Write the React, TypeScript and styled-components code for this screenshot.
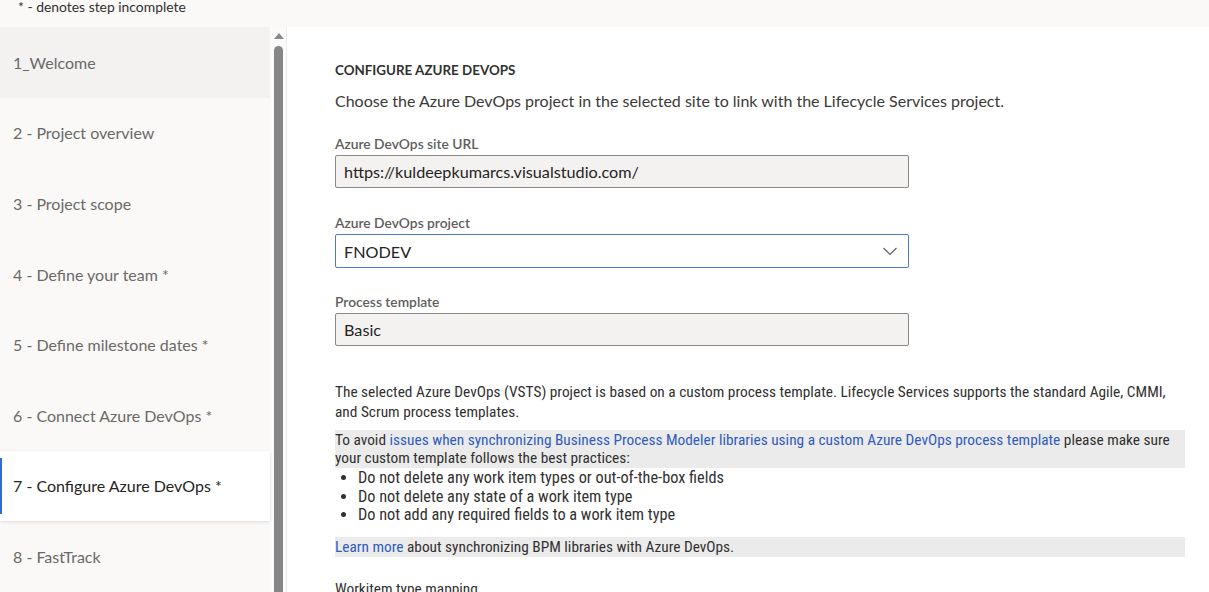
import React from "react"
import styled, { createGlobalStyle } from "styled-components"

const GlobalStyle = createGlobalStyle`
  html, body {
    margin: 0;
    padding: 0;
    background: #ffffff;
    overflow: hidden;
  }
  body {
    font-family: Lato, "Open Sans", sans-serif;
    color: #323130;
  }
`

const steps = [
  { label: "1_Welcome", state: "hover" },
  { label: "2 - Project overview", state: "idle" },
  { label: "3 - Project scope", state: "idle" },
  { label: "4 - Define your team *", state: "idle" },
  { label: "5 - Define milestone dates *", state: "idle" },
  { label: "6 - Connect Azure DevOps *", state: "idle" },
  { label: "7 - Configure Azure DevOps *", state: "active" },
  { label: "8 - FastTrack", state: "idle" },
]

const bullets = [
  "Do not delete any work item types or out-of-the-box fields",
  "Do not delete any state of a work item type",
  "Do not add any required fields to a work item type",
]

const App = () => {
  return (
    <>
      <GlobalStyle />
      <Page>
        <TopBar>* - denotes step incomplete</TopBar>
        <Body>
          <Sidebar>
            {steps.map((s) => (
              <Step key={s.label} $state={s.state}>
                {s.label}
              </Step>
            ))}
          </Sidebar>
          <ScrollTrack>
            <ScrollArrow />
            <ScrollThumb />
          </ScrollTrack>
          <Main>
            <Heading>CONFIGURE AZURE DEVOPS</Heading>
            <Intro>
              Choose the Azure DevOps project in the selected site to link with
              the Lifecycle Services project.
            </Intro>

            <Field>
              <Label>Azure DevOps site URL</Label>
              <ReadOnlyBox>https://kuldeepkumarcs.visualstudio.com/</ReadOnlyBox>
            </Field>

            <Field>
              <Label>Azure DevOps project</Label>
              <SelectBox>
                <span>FNODEV</span>
                <svg width="18" height="18" viewBox="0 0 18 18" fill="none">
                  <path
                    d="M2.5 6 L9 12.5 L15.5 6"
                    stroke="#605e5c"
                    strokeWidth="1.2"
                  />
                </svg>
              </SelectBox>
            </Field>

            <Field>
              <Label>Process template</Label>
              <ReadOnlyBox>Basic</ReadOnlyBox>
            </Field>

            <Notice>
              The selected Azure DevOps (VSTS) project is based on a custom
              process template. Lifecycle Services supports the standard Agile,
              CMMI, and Scrum process templates.
            </Notice>

            <Callout>
              <CalloutText>
                To avoid{" "}
                <Link href="#">
                  issues when synchronizing Business Process Modeler libraries
                  using a custom Azure DevOps process template
                </Link>{" "}
                please make sure your custom template follows the best
                practices:
              </CalloutText>
            </Callout>
            <BulletList>
              {bullets.map((b) => (
                <li key={b}>{b}</li>
              ))}
            </BulletList>

            <Callout $single>
              <CalloutText>
                <Link href="#">Learn more</Link> about synchronizing BPM
                libraries with Azure DevOps.
              </CalloutText>
            </Callout>

            <Mapping>Workitem type mapping</Mapping>
          </Main>
        </Body>
      </Page>
    </>
  )
}

export default App

const Page = styled.div`
  width: 1209px;
  height: 592px;
  display: flex;
  flex-direction: column;
  overflow: hidden;
`

const TopBar = styled.div`
  height: 27px;
  flex-shrink: 0;
  background: #faf9f8;
  font-size: 13.9px;
  line-height: 14px;
  padding-left: 18px;
  color: #323130;
  box-sizing: border-box;
`

const Body = styled.div`
  flex: 1;
  display: flex;
  min-height: 0;
`

const Sidebar = styled.nav`
  width: 270px;
  flex-shrink: 0;
  background: #faf9f8;
  display: flex;
  flex-direction: column;
`

const Step = styled.div<{ $state: string }>`
  position: relative;
  height: 70.6px;
  flex-shrink: 0;
  display: flex;
  align-items: center;
  padding-left: 13px;
  box-sizing: border-box;
  font-size: 16px;
  color: ${(p) => (p.$state === "active" ? "#252423" : "#6b6967")};
  background: ${(p) =>
    p.$state === "active"
      ? "#ffffff"
      : p.$state === "hover"
      ? "#f3f2f1"
      : "transparent"};
  box-shadow: ${(p) =>
    p.$state === "active" ? "0 1px 3px rgba(0,0,0,0.12)" : "none"};
  z-index: ${(p) => (p.$state === "active" ? 1 : 0)};

  &::before {
    content: "";
    display: ${(p) => (p.$state === "active" ? "block" : "none")};
    position: absolute;
    left: 0;
    top: 7px;
    bottom: 7px;
    width: 2px;
    background: #2f6bd0;
  }
`

const ScrollTrack = styled.div`
  width: 17px;
  flex-shrink: 0;
  background: #fbfbfb;
  border-right: 1px solid #efedeb;
  display: flex;
  flex-direction: column;
  align-items: center;
  padding-top: 6px;
  box-sizing: border-box;
  gap: 7px;
`

const ScrollArrow = styled.div`
  width: 0;
  height: 0;
  border-left: 5px solid transparent;
  border-right: 5px solid transparent;
  border-bottom: 6px solid #8a8a8a;
  margin-left: 1px;
`

const ScrollThumb = styled.div`
  flex: 1;
  width: 9px;
  margin-left: 1px;
  background: #868686;
  border-radius: 5px 5px 0 0;
`

const Main = styled.main`
  flex: 1;
  padding: 35px 0 0 48px;
  background: #ffffff;
  overflow: hidden;
`

const Heading = styled.h2`
  margin: 0;
  font-size: 13.4px;
  font-weight: 700;
  line-height: 16px;
  color: #323130;
`

const Intro = styled.p`
  margin: 13px 0 0;
  font-size: 16px;
  line-height: 20px;
  color: #3b3a39;
`

const Field = styled.div`
  display: flex;
  flex-direction: column;
  width: 574px;
  margin-top: 24px;

  & + & {
    margin-top: 26px;
  }
  & + & + & {
    margin-top: 25px;
  }
`

const Label = styled.label`
  font-size: 13.8px;
  font-weight: 600;
  line-height: 18px;
  color: #605e5c;
  margin-bottom: 2px;
`

const ReadOnlyBox = styled.div`
  height: 33px;
  box-sizing: border-box;
  border: 1px solid #8a8886;
  border-radius: 2px;
  background: #f3f2f1;
  padding: 0 8px;
  display: flex;
  align-items: center;
  font-size: 16.2px;
  color: #252423;
`

const SelectBox = styled(ReadOnlyBox)`
  background: #ffffff;
  border-color: #4a7cc9;
  justify-content: space-between;
  padding-right: 9px;
  height: 34px;
`

const narrow = `
  font-family: "Liberation Sans Narrow", "Roboto Condensed", sans-serif;
  font-size: 15.35px;
  color: #323130;
`

const Notice = styled.p`
  ${narrow}
  margin: 36px 0 0;
  width: 850px;
  line-height: 20px;
`

const Callout = styled.div<{ $single?: boolean }>`
  width: 850px;
  margin-top: ${(p) => (p.$single ? "12px" : "8px")};
  background: #ebebeb;
  padding: 1px 0;
`

const CalloutText = styled.div`
  ${narrow}
  line-height: 18px;
`

const Link = styled.a`
  color: #2f5cc0;
  text-decoration: none;
`

const BulletList = styled.ul`
  ${narrow}
  font-size: 16.3px;
  margin: 1px 0 0;
  padding-left: 23px;
  line-height: 18.5px;
`

const Mapping = styled.div`
  ${narrow}
  margin-top: 23px;
  line-height: 18px;
`
